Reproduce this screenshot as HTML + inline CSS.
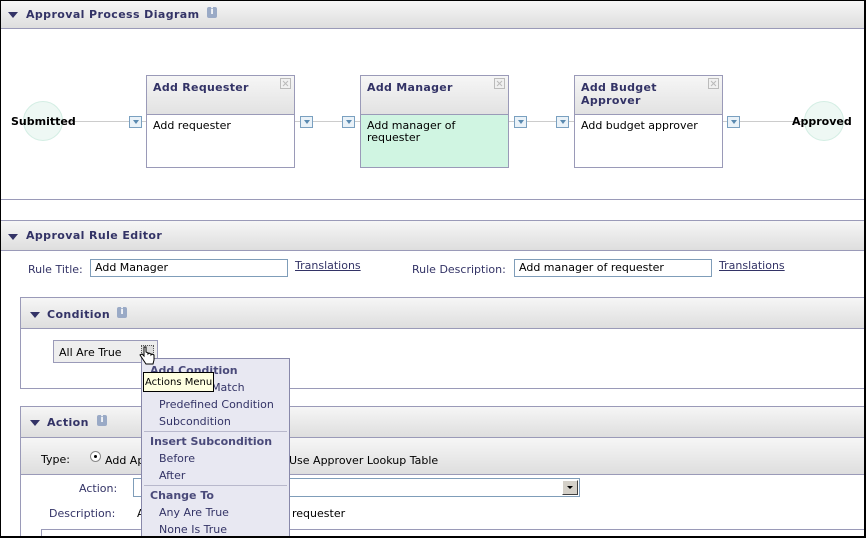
<!DOCTYPE html>
<html><head><meta charset="utf-8"><style>
*{margin:0;padding:0;box-sizing:border-box}
body{width:866px;height:538px;overflow:hidden;background:#fff;font-family:"DejaVu Sans","Liberation Sans",sans-serif;font-size:11px;color:#000;position:relative}
.a{position:absolute}
.frame{left:0;top:0;width:866px;height:538px;border:1px solid #000;border-right:2px solid #000;border-bottom:2px solid #000}
.hdr{background:linear-gradient(#f6f6f6,#dedede);border-bottom:1px solid #9a9ab8}
.ht{font-weight:bold;font-size:11px;color:#333366;letter-spacing:.4px}
.tri{width:0;height:0;border-left:5px solid transparent;border-right:5px solid transparent;border-top:6px solid #333366}
.info{width:10px;height:11px;background:#9aaac6;border-radius:2px;color:#fff;font-size:9px;font-weight:bold;text-align:center;line-height:11px}
.box{border:1px solid #9a9ab8;background:#fff}
.bh{height:39px;background:linear-gradient(#f6f6f6,#e2e2e2);border-bottom:1px solid #9a9ab8;padding:5px 6px;font-weight:bold;font-size:11px;letter-spacing:.3px;color:#333366;line-height:13px;position:relative}
.bh i{position:absolute;right:3px;top:2px;width:11px;height:11px;border:1px solid #bbb;background:#f0f0f0}
.bh i:before{content:"";position:absolute;left:1px;top:4px;width:7px;height:1px;background:#bbb;transform:rotate(45deg)}
.bh i:after{content:"";position:absolute;left:1px;top:4px;width:7px;height:1px;background:#bbb;transform:rotate(-45deg)}
.bb{padding:5px 6px;line-height:12px}
.dd{width:13px;height:12px;border:1px solid #7aa0c0;background:#eaf2f8}
.dd:after{content:"";position:absolute;left:3px;top:3px;border-left:3px solid transparent;border-right:3px solid transparent;border-top:4px solid #5a8ab0}
.circ{width:40px;height:40px;border-radius:50%;background:#eef8f4;border:1px solid #d4eee4}
.lbl{color:#333366}
.inp{border:1px solid #7f9db9;height:18px;padding:1px 4px;background:#fff}
.lnk{color:#333366;text-decoration:underline}
.mi{color:#333366;padding-left:17px;height:17px;line-height:17px}
.mh{color:#4a4a7a;font-weight:bold;padding-left:8px;height:17px;line-height:17px}
.sep{border-top:1px solid #b8b8cc;margin:1px 2px}
</style></head><body>
<div class="a hdr" style="left:1px;top:1px;width:864px;height:28px"></div>
<div class="a tri" style="left:8px;top:12px"></div>
<div class="a ht" style="left:26px;top:8px">Approval Process Diagram</div>
<div class="a info" style="left:207px;top:7px">i</div>
<div class="a" style="left:64px;top:121px;width:760px;height:1px;background:#ccc"></div>
<div class="a circ" style="left:23px;top:101px"></div>
<div class="a" style="left:11px;top:115px;font-weight:bold;font-size:11px">Submitted</div>
<div class="a circ" style="left:804px;top:101px"></div>
<div class="a" style="left:792px;top:115px;font-weight:bold;font-size:11px">Approved</div>

<div class="a box" style="left:146px;top:75px;width:149px;height:93px"><div class="bh">Add Requester<i></i></div><div class="bb">Add requester</div></div>
<div class="a box" style="left:360px;top:75px;width:149px;height:93px;background:#d0f5e2"><div class="bh">Add Manager<i></i></div><div class="bb">Add manager of<br>requester</div></div>
<div class="a box" style="left:574px;top:75px;width:149px;height:93px"><div class="bh">Add Budget<br>Approver<i></i></div><div class="bb">Add budget approver</div></div>

<div class="a dd" style="left:129px;top:116px"></div>
<div class="a dd" style="left:300px;top:116px"></div>
<div class="a dd" style="left:342px;top:116px"></div>
<div class="a dd" style="left:514px;top:116px"></div>
<div class="a dd" style="left:556px;top:116px"></div>
<div class="a dd" style="left:727px;top:116px"></div>

<div class="a" style="left:1px;top:199px;width:864px;height:1px;background:#9a9ab8"></div>
<div class="a hdr" style="left:1px;top:220px;width:864px;height:31px;border-top:1px solid #9a9ab8"></div>
<div class="a tri" style="left:8px;top:234px"></div>
<div class="a ht" style="left:26px;top:229px">Approval Rule Editor</div>

<div class="a lbl" style="left:28px;top:263px">Rule Title:</div>
<div class="a inp" style="left:90px;top:259px;width:198px">Add Manager</div>
<div class="a lnk" style="left:295px;top:259px">Translations</div>
<div class="a lbl" style="left:412px;top:263px">Rule Description:</div>
<div class="a inp" style="left:514px;top:259px;width:198px">Add manager of requester</div>
<div class="a lnk" style="left:719px;top:259px">Translations</div>

<div class="a" style="left:20px;top:297px;width:846px;height:92px;border:1px solid #9a9ab8;border-right:none"></div>
<div class="a hdr" style="left:21px;top:298px;width:845px;height:31px"></div>
<div class="a tri" style="left:30px;top:312px"></div>
<div class="a ht" style="left:47px;top:308px">Condition</div>
<div class="a info" style="left:117px;top:307px">i</div>
<div class="a" style="left:53px;top:340px;width:105px;height:23px;border:1px solid #9a9ab8;background:#eee;padding:5px 5px">All Are True</div>
<div class="a" style="left:141px;top:345px;width:13px;height:12px;border:1px dotted #555;background:#ddd"></div>

<div class="a" style="left:20px;top:406px;width:846px;height:132px;border:1px solid #9a9ab8;border-right:none"></div>
<div class="a hdr" style="left:21px;top:407px;width:845px;height:31px"></div>
<div class="a tri" style="left:30px;top:420px"></div>
<div class="a ht" style="left:47px;top:416px">Action</div>
<div class="a info" style="left:97px;top:415px">i</div>
<div class="a hdr" style="left:21px;top:438px;width:845px;height:37px"></div>
<div class="a" style="left:41px;top:453px">Type:</div>
<div class="a" style="left:90px;top:451px;width:11px;height:11px;border-radius:50%;border:1px solid #888;background:#fff"><div class="a" style="left:3px;top:3px;width:3px;height:3px;background:#000;border-radius:50%"></div></div>
<div class="a" style="left:105px;top:454px">Add Ap</div>
<div class="a" style="left:289px;top:454px">Use Approver Lookup Table</div>
<div class="a lbl" style="left:79px;top:482px">Action:</div>
<div class="a inp" style="left:133px;top:478px;width:447px;height:19px"></div>
<div class="a" style="left:562px;top:480px;width:16px;height:15px;background:#d4d0c8;border:1px solid;border-color:#fff #404040 #404040 #fff"><div class="a" style="left:4px;top:5px;border-left:3px solid transparent;border-right:3px solid transparent;border-top:3px solid #000"></div></div>
<div class="a lbl" style="left:49px;top:507px">Description:</div>
<div class="a" style="left:137px;top:507px">A</div>
<div class="a" style="left:292px;top:507px">requester</div>
<div class="a" style="left:41px;top:529px;width:825px;height:9px;border:1px solid #9a9ab8;border-right:none;border-bottom:none"></div>

<div class="a" style="left:141px;top:358px;width:149px;height:180px;background:#e8e8f2;border:1px solid #8888aa;padding-top:3px">
<div class="mh">Add Condition</div>
<div class="mi">Attribute Match</div>
<div class="mi">Predefined Condition</div>
<div class="mi">Subcondition</div>
<div class="sep"></div>
<div class="mh">Insert Subcondition</div>
<div class="mi">Before</div>
<div class="mi">After</div>
<div class="sep"></div>
<div class="mh">Change To</div>
<div class="mi">Any Are True</div>
<div class="mi">None Is True</div>
</div>
<div class="a" style="left:143px;top:372px;width:71px;height:20px;background:#ffffe1;border:1px solid #000;font-family:'DejaVu Sans',sans-serif;font-size:10px;padding:3px 1px;white-space:nowrap;line-height:13px;text-align:center">Actions Menu</div>
<svg class="a" style="left:139px;top:346px" width="16" height="20" viewBox="0 0 16 20"><path d="M5 1v9l-2-2-2 1 4 6 2 3h7l1-4v-5l-2-1-1 1v-1l-2-1-1 1v-1l-2-1V1z" fill="#fff" stroke="#000" stroke-width="1"/></svg>

<div class="a frame"></div>
</body></html>
